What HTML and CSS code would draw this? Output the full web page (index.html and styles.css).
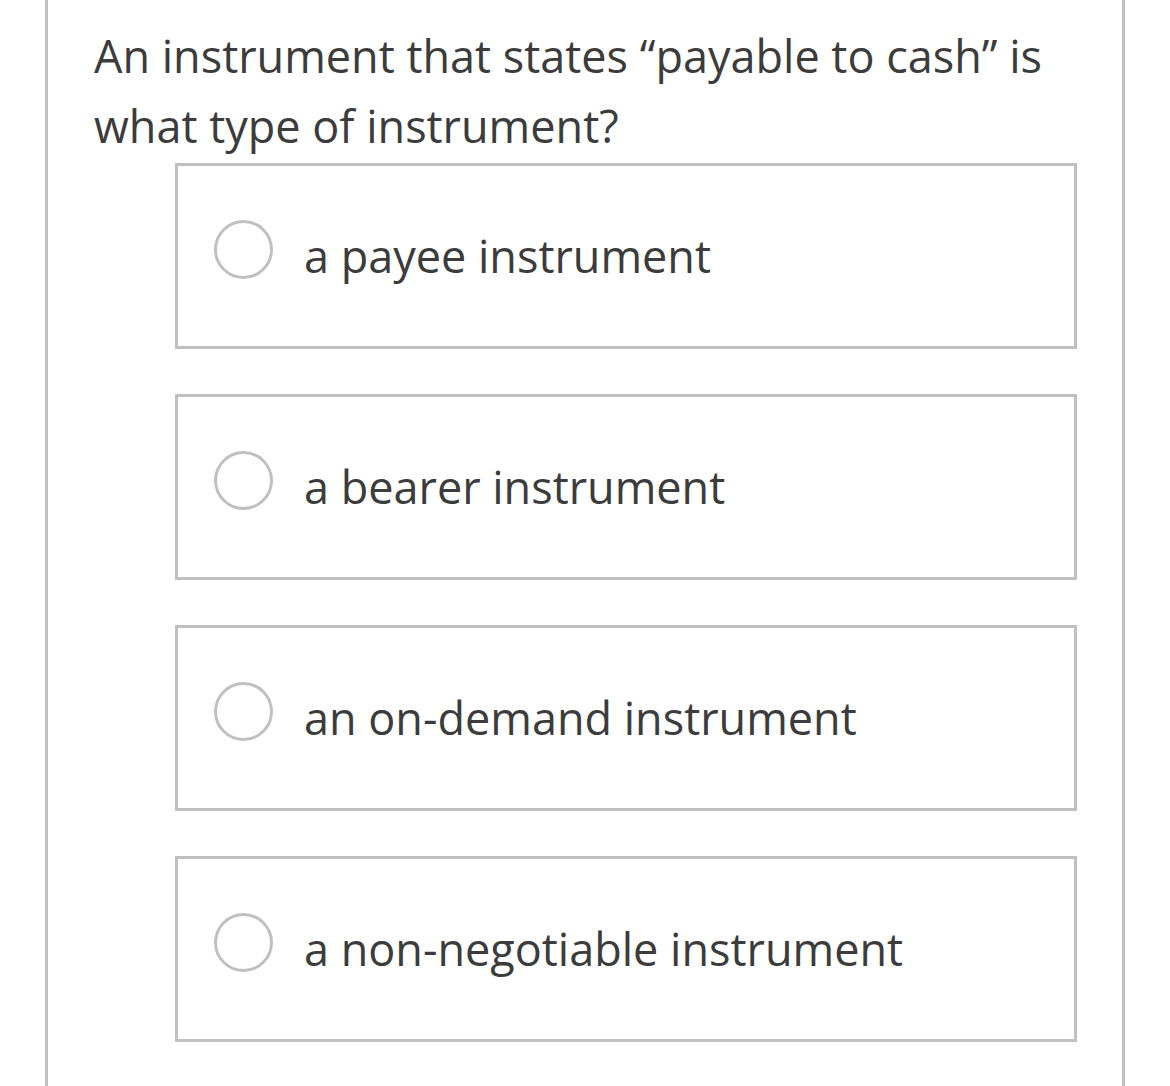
FILE: index.html
```html
<!DOCTYPE html>
<html lang="en">
<head>
<meta charset="utf-8">
<title>Question</title>
<link rel="stylesheet" href="styles.css">
</head>
<body>
<div class="frame">
  <div class="question">An instrument that states “payable to cash” is what type of instrument?</div>
  <div class="options">
    <label class="option"><span class="radio"></span><span class="label">a payee instrument</span></label>
    <label class="option"><span class="radio"></span><span class="label">a bearer instrument</span></label>
    <label class="option"><span class="radio"></span><span class="label">an on-demand instrument</span></label>
    <label class="option"><span class="radio"></span><span class="label">a non-negotiable instrument</span></label>
  </div>
</div>
</body>
</html>
```

FILE: styles.css
```css
html, body {
  margin: 0;
  padding: 0;
  background: #ffffff;
}
body {
  font-family: "Open Sans", "Noto Sans", sans-serif;
  color: #3c3c3c;
}
.frame {
  margin-left: 45px;
  width: 1080px;
  min-height: 1086px;
  box-sizing: border-box;
  border-left: 3px solid #c0c0c0;
  border-right: 3px solid #c0c0c0;
  padding: 21px 0 0 46px;
}
.question {
  font-size: 45px;
  line-height: 70px;
  width: 1000px;
}
.options {
  margin-top: 2px;
  margin-left: 81px;
  display: flex;
  flex-direction: column;
  gap: 45px;
}
.option {
  width: 902px;
  height: 186px;
  box-sizing: border-box;
  border: 3px solid #c0c0c0;
  display: flex;
  align-items: flex-start;
  padding: 54px 0 0 36px;
}
.radio {
  width: 59px;
  height: 59px;
  box-sizing: border-box;
  border: 3px solid #c0c0c0;
  border-radius: 50%;
  flex: none;
}
.label {
  font-size: 45px;
  line-height: 60px;
  margin-left: 31px;
  margin-top: 6px;
}
```
